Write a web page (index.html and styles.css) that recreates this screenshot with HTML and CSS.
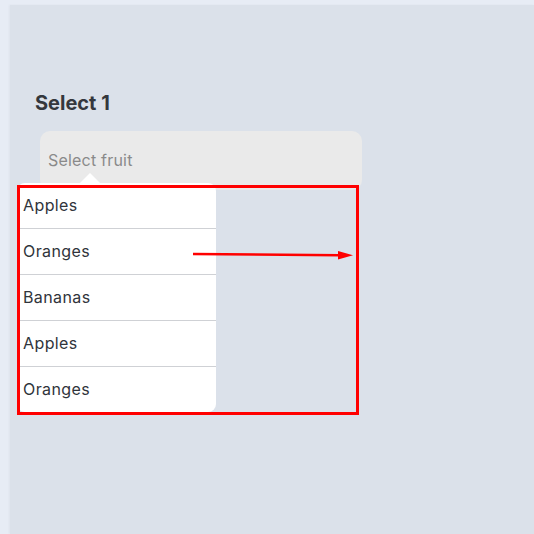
FILE: index.html
```html
<!DOCTYPE html>
<html lang="en">
<head>
<meta charset="utf-8">
<title>Select</title>
<link rel="stylesheet" href="styles.css">
</head>
<body>
<div class="panel">
  <h2 class="title">Select 1</h2>
  <div class="select">
    <span class="placeholder">Select fruit</span>
  </div>
  <span class="caret"></span>
  <ul class="dropdown">
    <li class="option">Apples</li>
    <li class="option">Oranges</li>
    <li class="option">Bananas</li>
    <li class="option">Apples</li>
    <li class="option">Oranges</li>
  </ul>
</div>
<div class="annot-box"></div>
<svg class="annot-arrow" width="534" height="534" viewBox="0 0 534 534" xmlns="http://www.w3.org/2000/svg">
  <line x1="193" y1="254" x2="340" y2="255.3" stroke="#ff0000" stroke-width="2.5"/>
  <polygon points="338,251 353,255.2 338,259.4" fill="#ff0000"/>
</svg>
</body>
</html>
```
FILE: styles.css
```css
html, body {
  margin: 0;
  padding: 0;
}
body {
  background: #e7ecf5;
  font-family: Inter, "Noto Sans", sans-serif;
  width: 534px;
  height: 534px;
  overflow: hidden;
}
.panel {
  position: relative;
  margin: 5px 0 0 10px;
  height: 529px;
  background: #dbe1ea;
  padding: 86px 0 0 25px;
  box-sizing: border-box;
  box-shadow: -1px 0 2px rgba(0, 0, 0, 0.04);
}
.title {
  margin: 0 0 16px 0;
  font-size: 20px;
  line-height: 24px;
  font-weight: 700;
  color: #34373d;
}
.select {
  margin-left: 5px;
  width: 322px;
  height: 59px;
  box-sizing: border-box;
  padding: 0 8px 1px 8px;
  background: #eaeaea;
  border-radius: 10px;
  display: flex;
  align-items: center;
}
.placeholder {
  font-size: 16px;
  line-height: 20px;
  letter-spacing: 0.2px;
  color: #8a8a8a;
}
.caret {
  position: absolute;
  left: 70px;
  top: 168px;
  width: 0;
  height: 0;
  border-left: 10px solid transparent;
  border-right: 10px solid transparent;
  border-bottom: 10px solid #ffffff;
}
.dropdown {
  position: absolute;
  left: 7px;
  top: 178px;
  width: 199px;
  margin: 0;
  padding: 0;
  list-style: none;
  background: #ffffff;
  border-radius: 8px;
}
.option {
  height: 45px;
  border-bottom: 1px solid #cfd1d5;
  display: flex;
  align-items: center;
  padding: 0 6px 1px 6px;
  box-sizing: border-box;
  height: 46px;
  font-size: 16px;
  letter-spacing: 0.4px;
  color: #30343b;
}
.option:last-child {
  border-bottom: none;
  height: 45px;
}
.annot-box {
  position: absolute;
  left: 17px;
  top: 185px;
  width: 342px;
  height: 230px;
  box-sizing: border-box;
  border: 3px solid #ff0000;
}
.annot-arrow {
  position: absolute;
  left: 0;
  top: 0;
  pointer-events: none;
}
```
